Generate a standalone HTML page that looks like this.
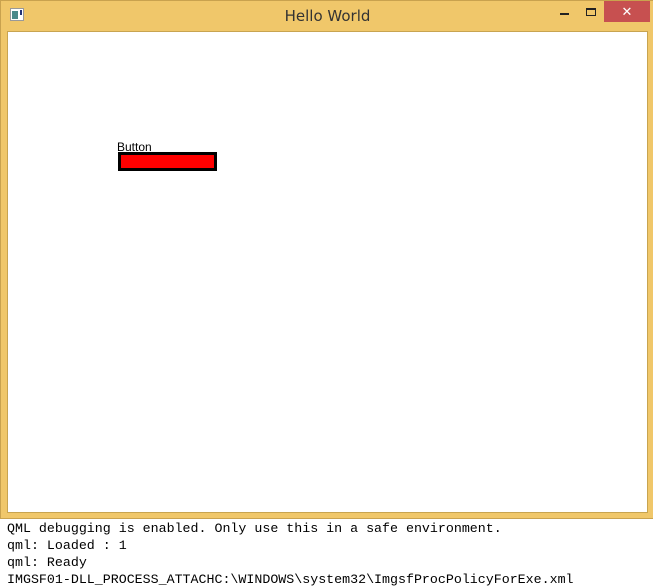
<!DOCTYPE html>
<html><head><style>
*{margin:0;padding:0;box-sizing:border-box}
body{width:653px;height:588px;overflow:hidden;background:#fff;position:relative;font-family:"Liberation Sans",sans-serif}
.win{position:absolute;left:0;top:0;width:653px;height:519px;background:#f0c76a;border:1px solid #c9a24e;border-right:none}
.content{position:absolute;left:6px;top:30px;width:641px;height:482px;background:#fff;border:1px solid #c8a450}
.title{position:absolute;left:0;width:653px;top:6px;text-align:center;font-size:15px;color:#333;font-family:"DejaVu Sans","Liberation Sans",sans-serif}
.close{position:absolute;left:603px;top:0;width:46px;height:21px;background:#c75050;color:#fff;text-align:center;font-size:13px;line-height:21px}
.console{position:absolute;left:7px;top:520px;font-family:"Liberation Mono",monospace;font-size:13.3px;line-height:17px;color:#000;white-space:pre}
</style></head><body>
<div class="win">
 <div style="position:absolute;left:9px;top:7px;width:14px;height:13px;background:#fff;border:1px solid #999"><div style="position:absolute;left:1px;top:2px;width:6px;height:8px;background:#4a8a8a"></div><div style="position:absolute;left:9px;top:1px;width:2px;height:5px;background:#237"></div></div>
 <div class="title">Hello World</div>
 <div style="position:absolute;left:559px;top:12px;width:9px;height:2px;background:#222"></div>
 <div style="position:absolute;left:585px;top:7px;width:10px;height:8px;border:1px solid #222;border-top-width:2px"></div>
 <div class="close">✕</div>
 <div class="content">
  <div style="position:absolute;left:109px;top:109px;font-size:12px;line-height:12px;color:#000">Button</div>
  <div style="position:absolute;left:110px;top:120px;width:99px;height:19px;background:#f00;border:3px solid #000"></div>
 </div>
</div>
<div class="console">QML debugging is enabled. Only use this in a safe environment.
qml: Loaded : 1
qml: Ready
IMGSF01-DLL_PROCESS_ATTACHC:\WINDOWS\system32\ImgsfProcPolicyForExe.xml</div>
</body></html>
